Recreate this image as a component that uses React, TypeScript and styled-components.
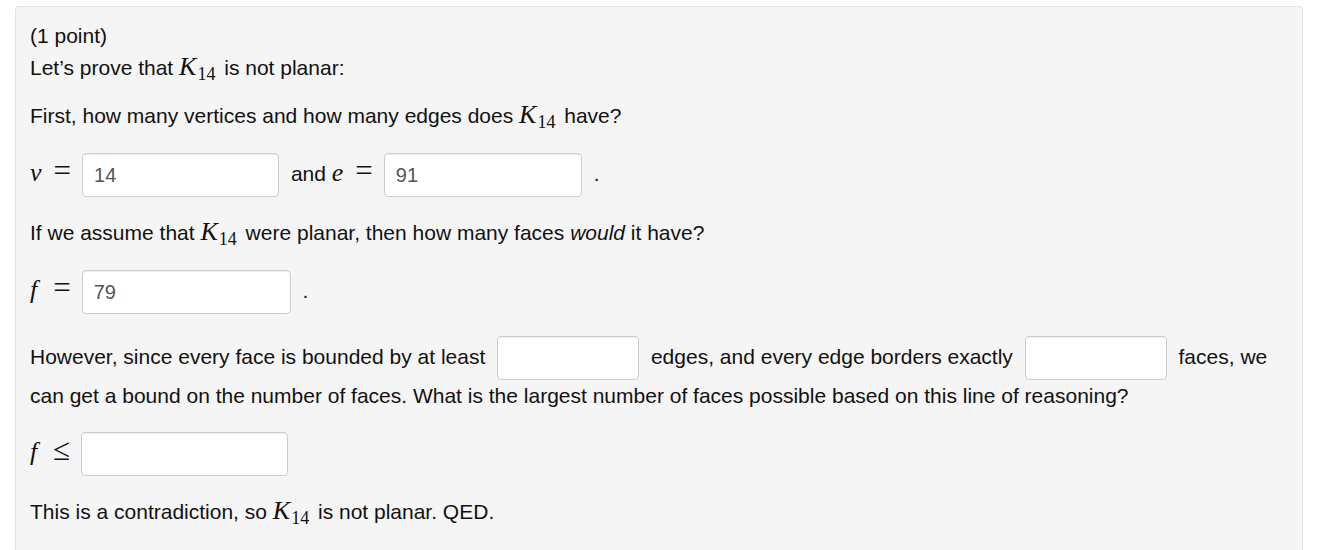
import React from "react";
import styled, { createGlobalStyle } from "styled-components";

const Global = createGlobalStyle`
  html, body { margin: 0; padding: 0; background: #ffffff; }
  body {
    font-family: "Liberation Sans", Arial, sans-serif;
    font-size: 21px;
    color: #111111;
  }
`;

const Panel = styled.div`
  margin: 6px 24px 0 15px;
  padding: 13px 14px 40px 14px;
  background: #f5f5f5;
  border: 1px solid #e3e3e3;
  border-bottom: none;
  border-radius: 4px 4px 0 0;
  line-height: 31px;
`;

const Para = styled.div<{ $gap?: number }>`
  margin-top: ${(p) => p.$gap ?? 0}px;
`;

const Field = styled.input<{ $w: number }>`
  box-sizing: border-box;
  width: ${(p) => p.$w}px;
  height: 44px;
  margin: 0 6px;
  padding: 0 11px;
  vertical-align: middle;
  border: 1px solid #cccccc;
  border-radius: 4px;
  background: #ffffff;
  box-shadow: inset 0 1px 1px rgba(0, 0, 0, 0.075);
  font-family: "Liberation Sans", Arial, sans-serif;
  font-size: 20px;
  color: #555555;
  outline: none;
`;

const Math = styled.span`
  font-family: "Liberation Serif", "DejaVu Serif", serif;
  font-size: 26px;
  line-height: 0;
  white-space: nowrap;
`;

const Mi = styled.span<{ $pad?: number }>`
  font-style: italic;
  padding-right: ${(p) => p.$pad ?? 0}px;
`;

const Op = styled.span`
  display: inline-block;
  font-size: 31px;
  margin: 0 5px 0 12px;
`;

const Sub = styled.span`
  font-size: 18px;
  position: relative;
  top: 5px;
  margin-left: 1px;
  margin-right: 3px;
`;

const Em = styled.em`
  font-style: italic;
`;

const K14 = () => (
  <Math>
    <Mi>K</Mi>
    <Sub>14</Sub>
  </Math>
);

export default function App() {
  return (
    <>
      <Global />
      <Panel>
        <Para>(1 point)</Para>
        <Para $gap={1}>
          Let’s prove that <K14 /> is not planar:
        </Para>
        <Para $gap={17}>
          First, how many vertices and how many edges does <K14 /> have?
        </Para>
        <Para $gap={22}>
          <Math>
            <Mi>v</Mi>
            <Op>=</Op>
          </Math>
          <Field $w={197} defaultValue="14" />{" "}
          and{" "}
          <Math>
            <Mi>e</Mi>
            <Op>=</Op>
          </Math>
          <Field $w={198} defaultValue="91" /> .
        </Para>
        <Para $gap={20}>
          If we assume that <K14 /> were planar, then how many faces{" "}
          <Em>would</Em> it have?
        </Para>
        <Para $gap={22}>
          <Math>
            <Mi $pad={4}>f</Mi>
            <Op>=</Op>
          </Math>
          <Field $w={209} defaultValue="79" /> .
        </Para>
        <Para $gap={22}>
          However, since every face is bounded by at least{" "}
          <Field $w={142} /> edges, and every edge borders exactly{" "}
          <Field $w={142} /> faces, we can get a bound on the number of
          faces. What is the largest number of faces possible based on this
          line of reasoning?
        </Para>
        <Para $gap={21}>
          <Math>
            <Mi $pad={4}>f</Mi>
            <Op>≤</Op>
          </Math>
          <Field $w={207} />
        </Para>
        <Para $gap={20}>
          This is a contradiction, so <K14 /> is not planar. QED.
        </Para>
      </Panel>
    </>
  );
}
